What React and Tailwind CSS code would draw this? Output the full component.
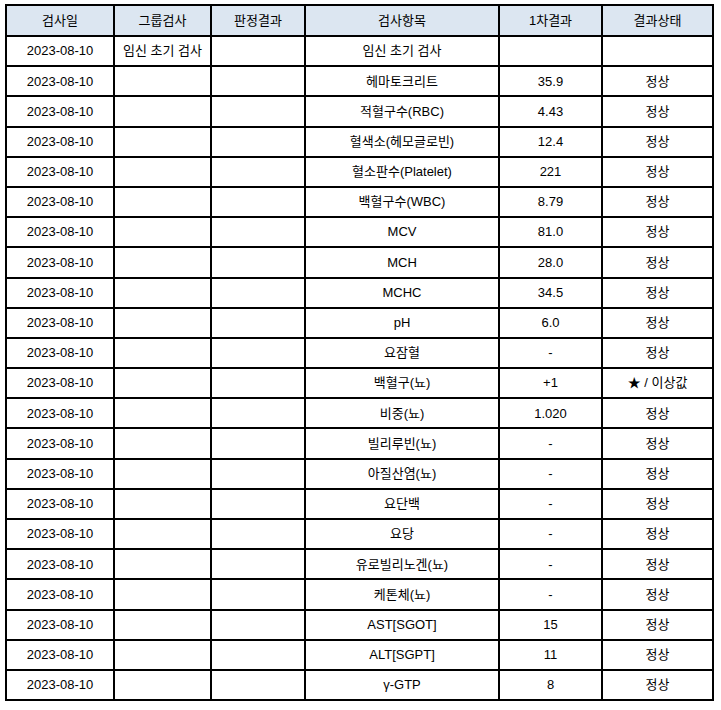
// App.jsx
const rows = [
  ["임신 초기 검사", "임신 초기 검사", "", ""],
  ["", "헤마토크리트", "35.9", "정상"],
  ["", "적혈구수(RBC)", "4.43", "정상"],
  ["", "혈색소(헤모글로빈)", "12.4", "정상"],
  ["", "혈소판수(Platelet)", "221", "정상"],
  ["", "백혈구수(WBC)", "8.79", "정상"],
  ["", "MCV", "81.0", "정상"],
  ["", "MCH", "28.0", "정상"],
  ["", "MCHC", "34.5", "정상"],
  ["", "pH", "6.0", "정상"],
  ["", "요잠혈", "-", "정상"],
  ["", "백혈구(뇨)", "+1", "★ / 이상값"],
  ["", "비중(뇨)", "1.020", "정상"],
  ["", "빌리루빈(뇨)", "-", "정상"],
  ["", "아질산염(뇨)", "-", "정상"],
  ["", "요단백", "-", "정상"],
  ["", "요당", "-", "정상"],
  ["", "유로빌리노겐(뇨)", "-", "정상"],
  ["", "케톤체(뇨)", "-", "정상"],
  ["", "AST[SGOT]", "15", "정상"],
  ["", "ALT[SGPT]", "11", "정상"],
  ["", "γ-GTP", "8", "정상"],
];

const headers = ["검사일", "그룹검사", "판정결과", "검사항목", "1차결과", "결과상태"];
const widths = ["w-[108px]", "w-[97px]", "w-[94px]", "w-[194px]", "w-[103px]", "w-[111px]"];

export default function App() {
  return (
    <div className="bg-white w-[721px] h-[710px] pl-[5px] pt-[4px] font-['Liberation_Sans','Noto_Sans_CJK_KR',sans-serif] text-[13px] text-black">
      <table className="table-fixed border-collapse w-[707px] border-2 border-black">
        <colgroup>
          {widths.map((w, i) => (
            <col key={i} className={w} />
          ))}
        </colgroup>
        <thead>
          <tr className="h-[31px] bg-[#dce6f1]">
            {headers.map((h) => (
              <th key={h} className="border-2 border-black font-normal text-center p-0">
                {h}
              </th>
            ))}
          </tr>
        </thead>
        <tbody>
          {rows.map((r, i) => (
            <tr key={i} className="h-[30.2px]">
              <td className="border-2 border-black text-center p-0">2023-08-10</td>
              <td className="border-2 border-black text-center p-0">{r[0]}</td>
              <td className="border-2 border-black p-0"></td>
              <td className="border-2 border-black text-center p-0">{r[1]}</td>
              <td className="border-2 border-black text-center p-0">{r[2]}</td>
              <td className="border-2 border-black text-center p-0">{r[3]}</td>
            </tr>
          ))}
        </tbody>
      </table>
    </div>
  );
}
